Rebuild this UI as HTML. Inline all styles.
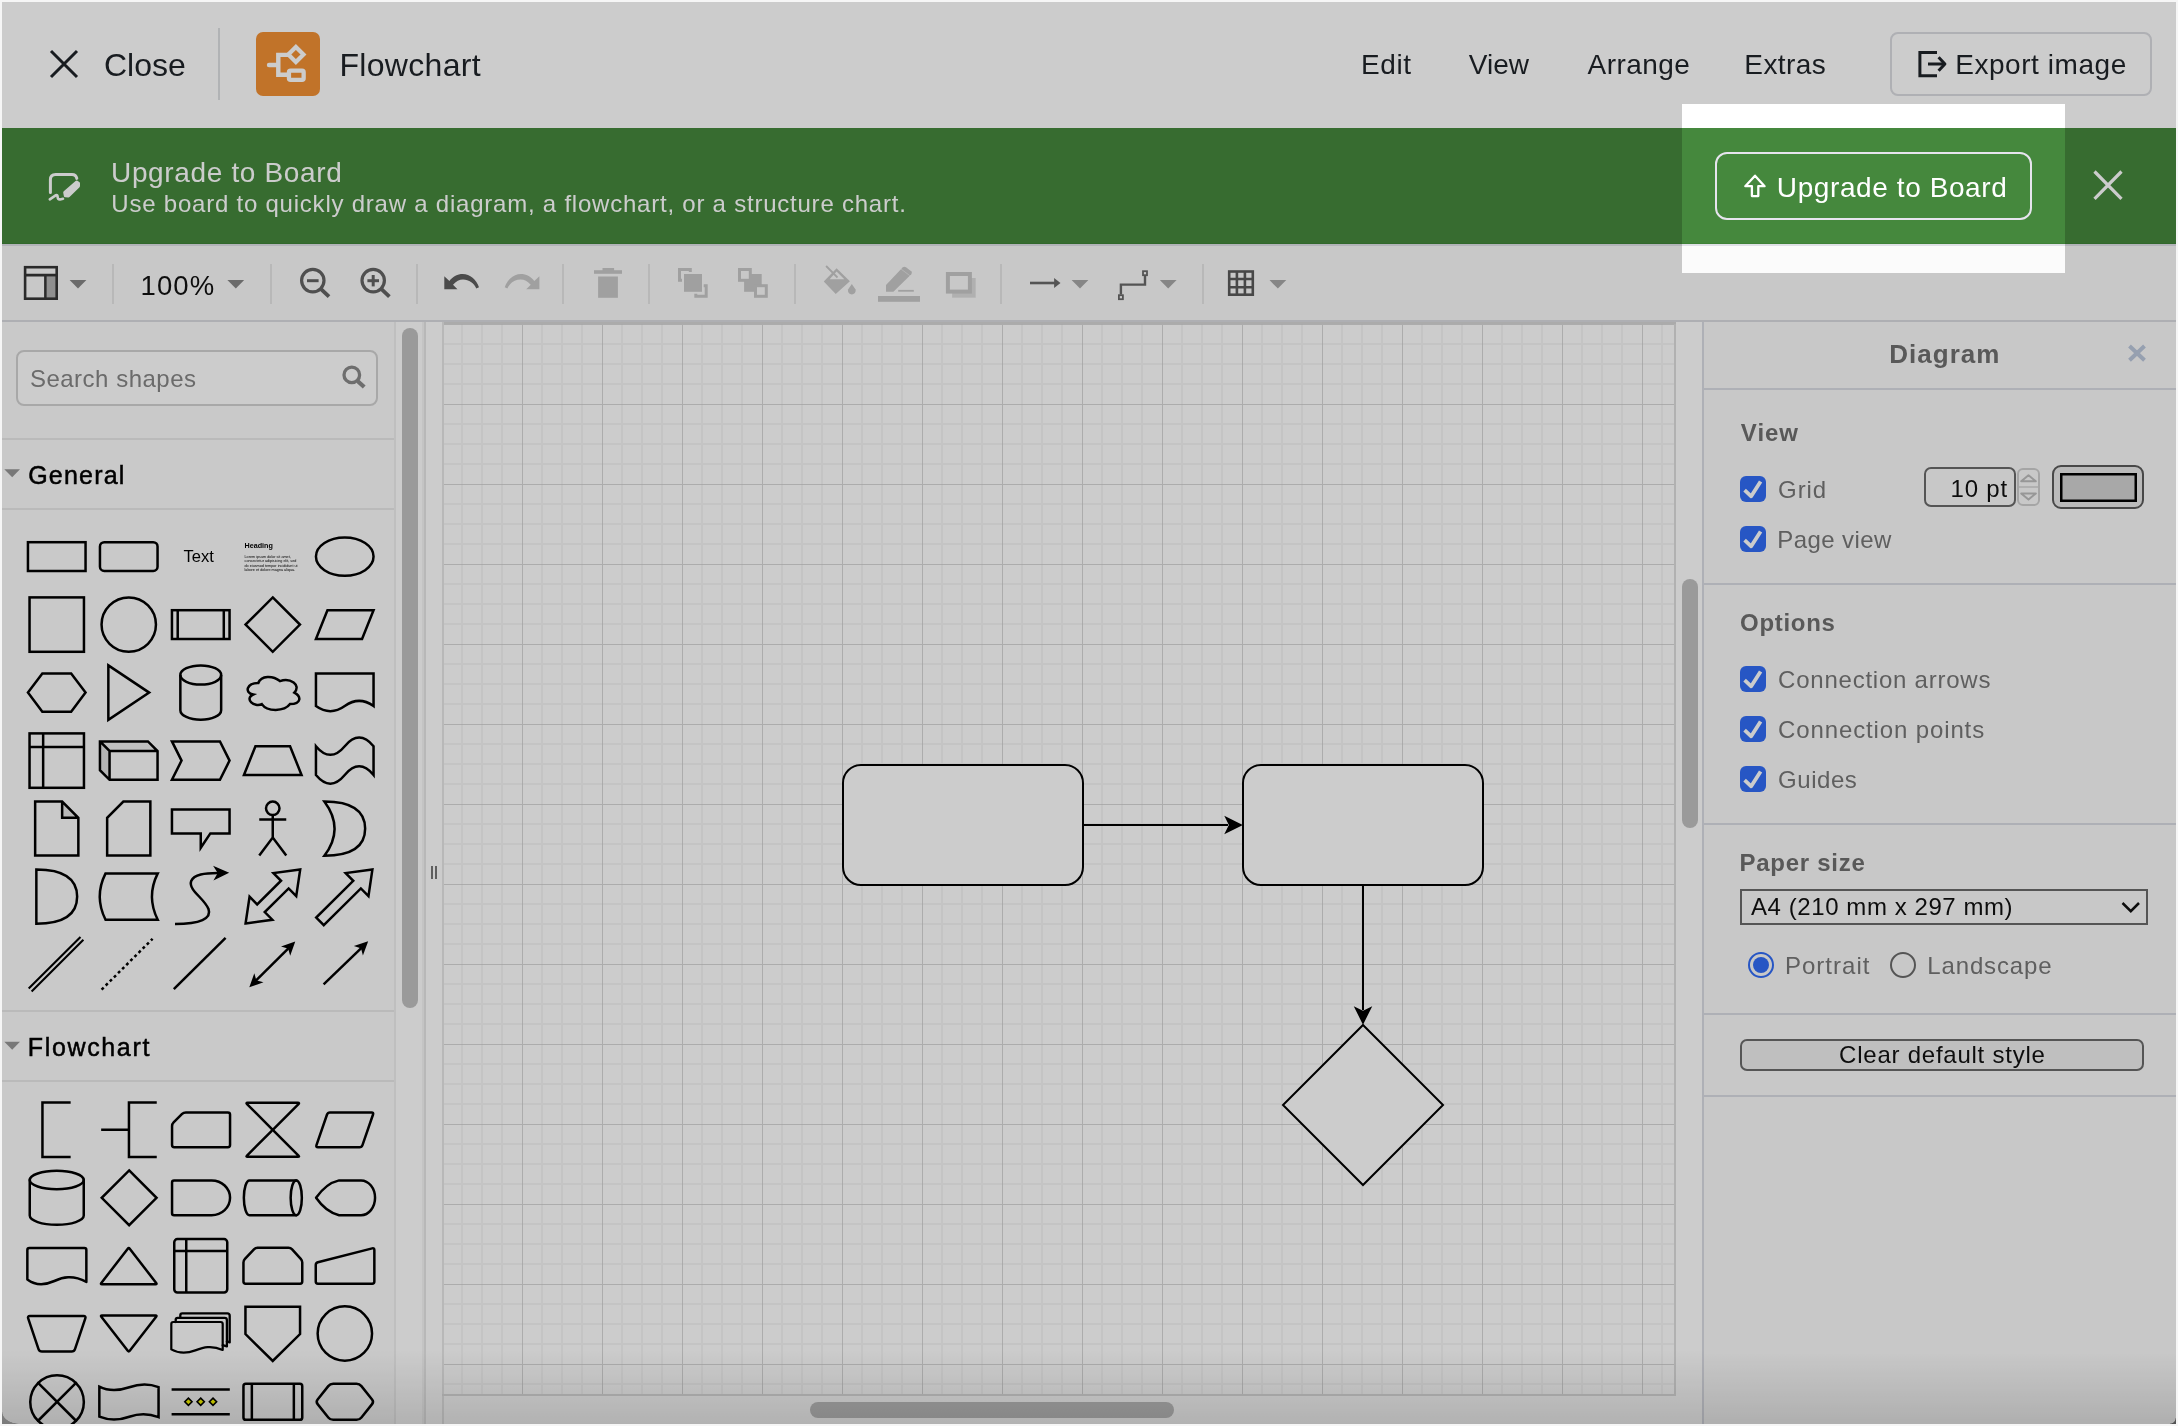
<!DOCTYPE html><html lang="en"><head><meta charset="utf-8"><title>Flowchart</title><style>
html,body{margin:0;padding:0}
body{width:2178px;height:1426px;overflow:hidden;background:#f6f6f6;font-family:"Liberation Sans",sans-serif;position:relative}
#app{will-change:transform;position:absolute;left:0;top:0;width:2178px;height:1426px;clip-path:inset(2px 2px 2px 2px);background:#fff;overflow:hidden}
.t{position:absolute;white-space:nowrap;display:block}
.b{position:absolute;box-sizing:border-box}
svg{position:absolute;left:0;top:0;overflow:visible}
</style></head><body><div id="app">
<div id="header">
<div class="b" style="left:0px;top:0px;width:2178px;height:128px;background:#fff"></div>
<span class="t" style="left:103.90px;top:48.91px;font-size:32px;line-height:32px;color:#1f2329;letter-spacing:0.046px;">Close</span>
<div class="b" style="left:218px;top:28px;width:2px;height:72px;background:#dee0e3"></div>
<div class="b" style="left:256px;top:32px;width:64px;height:64px;background:#f29034;border-radius:7px"></div>
<span class="t" style="left:339.38px;top:48.91px;font-size:32px;line-height:32px;color:#1f2329;letter-spacing:0.316px;">Flowchart</span>
<span class="t" style="left:1360.90px;top:50.90px;font-size:28px;line-height:28px;color:#1f2329;letter-spacing:0.649px;">Edit</span>
<span class="t" style="left:1468.79px;top:50.90px;font-size:28px;line-height:28px;color:#1f2329;letter-spacing:0.019px;">View</span>
<span class="t" style="left:1587.54px;top:50.90px;font-size:28px;line-height:28px;color:#1f2329;letter-spacing:0.444px;">Arrange</span>
<span class="t" style="left:1744.30px;top:50.90px;font-size:28px;line-height:28px;color:#1f2329;letter-spacing:0.410px;">Extras</span>
<div class="b" style="left:1890px;top:32px;width:262px;height:64px;border:2px solid #dbdce1;border-radius:8px"></div>
<span class="t" style="left:1955.20px;top:50.90px;font-size:28px;line-height:28px;color:#1f2329;letter-spacing:0.553px;">Export image</span>
</div>
<div id="banner">
<div class="b" style="left:0px;top:128px;width:2178px;height:116px;background:#45883d"></div>
<div class="b" style="left:0px;top:243px;width:2178px;height:1px;background:#3f8237"></div>
<span class="t" style="left:111.04px;top:159.40px;font-size:28px;line-height:28px;color:#fff;letter-spacing:0.648px;">Upgrade to Board</span>
<span class="t" style="left:111.35px;top:191.78px;font-size:24px;line-height:24px;color:#fff;letter-spacing:0.774px;">Use board to quickly draw a diagram, a flowchart, or a structure chart.</span>
<div class="b" style="left:1715px;top:152px;width:317px;height:68px;border:2px solid #e6e4ee;border-radius:12px"></div>
<span class="t" style="left:1776.84px;top:173.50px;font-size:28px;line-height:28px;color:#fff;letter-spacing:0.594px;">Upgrade to Board</span>
</div>
<div id="toolbar">
<div class="b" style="left:0px;top:244px;width:2178px;height:78px;background:#fbfbfb;border-top:2px solid #dfe0e6;border-bottom:2px solid #dadbe0"></div>
<div class="b" style="left:112px;top:264px;width:2px;height:40px;background:#e6e6e6"></div>
<div class="b" style="left:270px;top:264px;width:2px;height:40px;background:#e6e6e6"></div>
<div class="b" style="left:416px;top:264px;width:2px;height:40px;background:#e6e6e6"></div>
<div class="b" style="left:562px;top:264px;width:2px;height:40px;background:#e6e6e6"></div>
<div class="b" style="left:648px;top:264px;width:2px;height:40px;background:#e6e6e6"></div>
<div class="b" style="left:794px;top:264px;width:2px;height:40px;background:#e6e6e6"></div>
<div class="b" style="left:1000px;top:264px;width:2px;height:40px;background:#e6e6e6"></div>
<div class="b" style="left:1202px;top:264px;width:2px;height:40px;background:#e6e6e6"></div>
<span class="t" style="left:140.51px;top:271.82px;font-size:27.5px;line-height:27.5px;color:#111;letter-spacing:1.112px;">100%</span>
</div>
<div id="sidebar">
<div class="b" style="left:0px;top:322px;width:394px;height:1104px;background:#fcfcfc"></div>
<div class="b" style="left:394px;top:322px;width:2px;height:1104px;background:#efefef"></div>
<div class="b" style="left:16px;top:350px;width:362px;height:56px;border:2px solid #d2d2d2;border-radius:8px;background:#fff"></div>
<span class="t" style="left:29.92px;top:366.58px;font-size:24px;line-height:24px;color:#868686;letter-spacing:0.503px;">Search shapes</span>
<div class="b" style="left:0px;top:438px;width:394px;height:2px;background:#e9e9e9"></div>
<div class="b" style="left:0px;top:508px;width:394px;height:2px;background:#e9e9e9"></div>
<div class="b" style="left:0px;top:1010px;width:394px;height:2px;background:#e9e9e9"></div>
<div class="b" style="left:0px;top:1080px;width:394px;height:2px;background:#e9e9e9"></div>
<span class="t" style="left:28.15px;top:462.64px;font-size:25px;line-height:25px;color:#000;letter-spacing:1.212px;-webkit-text-stroke:0.5px #000;">General</span>
<span class="t" style="left:27.75px;top:1034.64px;font-size:25px;line-height:25px;color:#000;letter-spacing:1.656px;-webkit-text-stroke:0.5px #000;">Flowchart</span>
<div class="b" style="left:402px;top:328px;width:16px;height:680px;background:#c1c1c1;border-radius:8px"></div>
<div class="b" style="left:422px;top:322px;width:2px;height:1104px;background:#f5f5f5"></div>
<div class="b" style="left:424px;top:322px;width:2px;height:1104px;background:#e7e7e7"></div>
</div>
<div id="canvas">
<svg width="2178" height="1426" viewBox="0 0 2178 1426"><defs><pattern id="grid" x="442" y="324" width="80" height="80" patternUnits="userSpaceOnUse"><path d="M20 0V80M40 0V80M60 0V80M0 20H80M0 40H80M0 60H80" stroke="#d0d0d0" stroke-opacity="0.2" stroke-width="2" fill="none"/><path d="M80 0H0V80" stroke="#d0d0d0" stroke-opacity="0.85" stroke-width="2" fill="none"/></pattern><clipPath id="gc"><rect x="442" y="324" width="1232" height="1071"/></clipPath></defs><rect x="442" y="324" width="1232" height="1071" fill="url(#grid)" clip-path="url(#gc)"/></svg>
<div class="b" style="left:444px;top:322px;width:1232px;height:2px;background:#d6d6d6"></div>
<div class="b" style="left:442px;top:322px;width:2px;height:1104px;background:#e7e7e7"></div>
<div class="b" style="left:1674px;top:324px;width:2px;height:1072px;background:#dedede"></div>
<div class="b" style="left:442px;top:1394px;width:1234px;height:2px;background:#dedede"></div>
<div class="b" style="left:1682px;top:579px;width:16px;height:249px;background:#c1c1c1;border-radius:8px"></div>
<div class="b" style="left:810px;top:1402px;width:364px;height:16px;background:#c1c1c1;border-radius:8px"></div>
<div class="b" style="left:431px;top:866px;width:2px;height:13px;background:#777"></div>
<div class="b" style="left:435px;top:866px;width:2px;height:13px;background:#777"></div>
<svg width="2178" height="1426" viewBox="0 0 2178 1426" fill="#fff" stroke="#000" stroke-width="2"><rect x="843" y="765" width="240" height="120" rx="18" ry="18"/><rect x="1243" y="765" width="240" height="120" rx="18" ry="18"/><path d="M1083 825H1228" fill="none"/><path d="M1240.5 825L1226.5 832L1230 825L1226.5 818Z" fill="#000"/><path d="M1363 885V1010" fill="none"/><path d="M1363 1022.5L1356 1008.5L1363 1012L1370 1008.5Z" fill="#000"/><path d="M1363 1025L1443 1105L1363 1185L1283 1105Z"/></svg>
</div>
<div id="panel">
<div class="b" style="left:1704px;top:322px;width:474px;height:1104px;background:#fbfbfb"></div>
<div class="b" style="left:1702px;top:322px;width:2px;height:1104px;background:#dadce4"></div>
<div class="b" style="left:1704px;top:388px;width:474px;height:2px;background:#dadce4"></div>
<div class="b" style="left:1704px;top:583px;width:474px;height:2px;background:#dadce4"></div>
<div class="b" style="left:1704px;top:823px;width:474px;height:2px;background:#dadce4"></div>
<div class="b" style="left:1704px;top:1013px;width:474px;height:2px;background:#dadce4"></div>
<div class="b" style="left:1704px;top:1095px;width:474px;height:2px;background:#dadce4"></div>
<span class="t" style="left:1889.18px;top:341.19px;font-size:26px;line-height:26px;color:#707070;letter-spacing:1.046px;font-weight:bold;">Diagram</span>
<span class="t" style="left:1740.86px;top:421.48px;font-size:24px;line-height:24px;color:#707070;letter-spacing:0.944px;font-weight:bold;">View</span>
<span class="t" style="left:1740.02px;top:611.28px;font-size:24px;line-height:24px;color:#707070;letter-spacing:0.716px;font-weight:bold;">Options</span>
<span class="t" style="left:1739.42px;top:851.28px;font-size:24px;line-height:24px;color:#707070;letter-spacing:0.741px;font-weight:bold;">Paper size</span>
<span class="t" style="left:1778.10px;top:477.58px;font-size:24px;line-height:24px;color:#777;letter-spacing:0.867px;">Grid</span>
<span class="t" style="left:1777.33px;top:528.08px;font-size:24px;line-height:24px;color:#777;letter-spacing:0.395px;">Page view</span>
<span class="t" style="left:1778.10px;top:668.08px;font-size:24px;line-height:24px;color:#777;letter-spacing:0.767px;">Connection arrows</span>
<span class="t" style="left:1778.10px;top:718.08px;font-size:24px;line-height:24px;color:#777;letter-spacing:0.871px;">Connection points</span>
<span class="t" style="left:1778.10px;top:768.08px;font-size:24px;line-height:24px;color:#777;letter-spacing:0.546px;">Guides</span>
<div class="b" style="left:1740px;top:476px;width:26px;height:26px;background:#316cf6;border-radius:6px"></div>
<div class="b" style="left:1740px;top:526px;width:26px;height:26px;background:#316cf6;border-radius:6px"></div>
<div class="b" style="left:1740px;top:666px;width:26px;height:26px;background:#316cf6;border-radius:6px"></div>
<div class="b" style="left:1740px;top:716px;width:26px;height:26px;background:#316cf6;border-radius:6px"></div>
<div class="b" style="left:1740px;top:766px;width:26px;height:26px;background:#316cf6;border-radius:6px"></div>
<div class="b" style="left:1924px;top:467px;width:92px;height:40px;border:2px solid #6b6b6b;border-radius:7px"></div>
<span class="t" style="left:1950.58px;top:476.58px;font-size:24px;line-height:24px;color:#111;letter-spacing:0.804px;">10 pt</span>
<div class="b" style="left:2017px;top:468px;width:23px;height:38px;border:2px solid #cfcfcf;border-radius:6px"></div>
<div class="b" style="left:2052px;top:465px;width:92px;height:44px;border:2px solid #5a5a5a;border-radius:9px;background:#e9e9e9"></div>
<div class="b" style="left:2059.5px;top:473px;width:77px;height:28.5px;box-shadow:inset 0 0 0 2.5px #000;background:#d2d2d2"></div>
<div class="b" style="left:1740px;top:889px;width:408px;height:36px;border:2px solid #6b6b6b"></div>
<span class="t" style="left:1751.05px;top:895.48px;font-size:24px;line-height:24px;color:#111;letter-spacing:0.569px;">A4 (210 mm x 297 mm)</span>
<div class="b" style="left:1748px;top:952px;width:26px;height:26px;border:2px solid #316cf6;border-radius:50%"></div>
<div class="b" style="left:1753px;top:957px;width:16px;height:16px;background:#316cf6;border-radius:50%"></div>
<span class="t" style="left:1784.93px;top:953.68px;font-size:24px;line-height:24px;color:#777;letter-spacing:1.026px;">Portrait</span>
<div class="b" style="left:1890px;top:952px;width:26px;height:26px;border:2px solid #6b6b6b;border-radius:50%"></div>
<span class="t" style="left:1927.23px;top:953.68px;font-size:24px;line-height:24px;color:#777;letter-spacing:0.874px;">Landscape</span>
<div class="b" style="left:1740px;top:1039px;width:404px;height:32px;border:2px solid #6b6b6b;border-radius:7px;background:#efefef"></div>
<span class="t" style="left:1839.10px;top:1043.48px;font-size:24px;line-height:24px;color:#111;letter-spacing:0.759px;">Clear default style</span>
</div>
<svg id="icons" width="2178" height="1426" viewBox="0 0 2178 1426" fill="none"><path d="M51 51L77 77M77 51L51 77" stroke="#1f2329" stroke-width="3"/><g stroke="#fff" stroke-width="4.4" stroke-linecap="round" stroke-linejoin="round"><path d="M269 65H277"/><path d="M288.5 54.9H278.3V74.7H288" stroke-linecap="butt" stroke-linejoin="miter"/><path d="M295.9 46.9L303.5 54.5L295.9 62.1L288.3 54.5Z" stroke-width="4.2" stroke-linejoin="miter"/><rect x="288.95" y="70.65" width="14.7" height="9.2" rx="1.6" stroke-width="4.3"/></g><g stroke="#1f2329" stroke-width="3" stroke-linejoin="miter"><path d="M1937 52.4H1919.9V75.7H1937"/><path d="M1928 64H1943.5"/><path d="M1938.6 57.2L1944.9 64L1938.6 70.8" stroke-linejoin="round"/></g><g stroke="#fff" stroke-width="3" stroke-linecap="round" stroke-linejoin="round"><path d="M50.4 192.5V179.6Q50.4 174.4 55.6 174.4H72Q76 174.4 76.8 178.4"/><path d="M49.8 199.3L56 195.2Q57.5 194.6 57.6 196.6Q57.6 199.6 60 199.4L63 198.7" stroke-width="2.6"/><path d="M76.6 182.2L78.4 183.3V186L68.4 195.8L65.4 195.6L64.8 192.4Z" fill="#fff" stroke-width="3.2"/></g><path d="M1755 175.7L1764.6 186.2H1758.3V196.1H1751.9V186.2H1745.3Z" stroke="#fff" stroke-width="2.3" stroke-linejoin="round"/><path d="M2094.5 171.5L2121.5 198.8M2121.5 171.5L2094.5 198.8" stroke="#fff" stroke-width="3.2"/><rect x="46.5" y="276.3" width="10.5" height="22.5" fill="#b3b3b3"/><g stroke="#353535" stroke-width="2.6"><rect x="25.1" y="267.2" width="31.6" height="31.5"/><path d="M25 275.1H57M45.4 275V299"/></g><path d="M69.6 280.1H86.4L78 288.6Z" fill="#868686"/><path d="M227.4 280.1H244.20000000000002L235.8 288.6Z" fill="#868686"/><path d="M1071.6 280.1H1088.4L1080 288.6Z" fill="#a8a8a8"/><path d="M1159.8 280.1H1176.6000000000001L1168.2 288.6Z" fill="#a8a8a8"/><path d="M1269.5 280.1H1286.3000000000002L1277.9 288.6Z" fill="#a8a8a8"/><g stroke="#636363" stroke-width="3.2"><circle cx="312.8" cy="280.6" r="11.2"/><path d="M320.8 288.8L329.0 296.6" stroke-width="3.8"/><path d="M307.0 280.7H318.6" stroke-width="3"/></g><g stroke="#636363" stroke-width="3.2"><circle cx="373.2" cy="280.6" r="11.2"/><path d="M381.2 288.8L389.4 296.6" stroke-width="3.8"/><path d="M367.4 280.7H379.0" stroke-width="3"/><path d="M373.2 275H373.2V286.4" stroke-width="3"/></g><path d="M444.3 276.2V289.2H457.5L453 284.7C456 281.2 459.5 279.5 463 279.5C469 279.5 474 283 476.3 288.4L479 287.2C476.5 279.5 470 274 462.7 274C457.5 274 453 276.5 449.4 280.9Z" fill="#5e5e5e"/><path d="M444.3 276.2V289.2H457.5L453 284.7C456 281.2 459.5 279.5 463 279.5C469 279.5 474 283 476.3 288.4L479 287.2C476.5 279.5 470 274 462.7 274C457.5 274 453 276.5 449.4 280.9Z" fill="#c9c9c9" transform="translate(983.7 0) scale(-1 1)"/><g fill="#c8c8c8"><rect x="594" y="270.2" width="28" height="3.6"/><rect x="602.5" y="268" width="11.6" height="3"/><rect x="598.1" y="276.5" width="19.8" height="21.3"/></g><g fill="#c8c8c8"><rect x="684" y="274" width="18" height="17.8"/><path d="M678 268H691.8V272H688.8V271H681V278.8H682V281.8H678Z"/><path d="M707.7 297.8H694.3V293.8H697.3V294.8H704.7V287.2H703.7V284.2H707.7Z"/></g><rect x="744.1" y="274" width="17.6" height="17.8" fill="#c8c8c8"/><rect x="739.5" y="269.5" width="10.8" height="10.8" fill="#fbfbfb" stroke="#c8c8c8" stroke-width="3"/><rect x="755.5" y="285.7" width="10.8" height="10.6" fill="#fbfbfb" stroke="#c8c8c8" stroke-width="3"/><path d="M836.6 268.3L849.9 281.3L835.7 294L823.8 281.6Z" fill="#c8c8c8"/><path d="M836.6 271.5L844.3 279.3H829.6Z" fill="#fbfbfb"/><path d="M826.1 266L837.5 277.5" stroke="#c8c8c8" stroke-width="1.8"/><path d="M851.8 284L855.6 289.6A3.9 3.9 0 1 1 848 289.6Z" fill="#c8c8c8"/><path d="M886 291.7V285L902.6 267.4Q904.2 266 906 267.3L911.2 271.2Q912.6 272.6 911.3 274.2L893.4 291.7Z" fill="#c8c8c8"/><path d="M901 269L909.8 275.6" stroke="#fbfbfb" stroke-width="0.8" opacity="0.6"/><rect x="898.2" y="289.9" width="15.6" height="1.8" fill="#c8c8c8"/><rect x="878" y="296" width="42" height="5.8" fill="#c8c8c8"/><rect x="952.1" y="278" width="23.6" height="19.7" fill="#dddddd"/><rect x="947.9" y="274" width="22" height="17.6" fill="#fbfbfb" stroke="#c8c8c8" stroke-width="4"/><path d="M1030 283H1056" stroke="#6a6a6a" stroke-width="2.6"/><path d="M1054.1 278L1060.5 283L1054.1 288.1Z" fill="#6a6a6a"/><g stroke="#6a6a6a" stroke-width="2.4"><path d="M1145 275.5V284.6H1120.9V294.6"/><rect x="1143" y="271.2" width="4" height="4" stroke-width="1.8"/><rect x="1118.9" y="295.2" width="4" height="4" stroke-width="1.8"/></g><g stroke="#5a5a5a" stroke-width="2.6"><rect x="1229.2" y="271.5" width="23.6" height="23.2"/><path d="M1236.9 271.5V294.7M1244.9 271.5V294.7M1229 279H1253M1229 287.2H1253"/></g><g stroke="#8a8a8a" filter="url(#blur1)"><circle cx="351.8" cy="374.9" r="7.8" stroke-width="3.3"/><path d="M357.8 381.2L364.2 387" stroke-width="4.2"/></g><defs><filter id="blur1" x="-20%" y="-20%" width="140%" height="140%"><feGaussianBlur stdDeviation="0.5"/></filter></defs><path d="M4.3 469.2H20L12.2 477.2Z" fill="#979797"/><path d="M4.3 1041.7H20L12.2 1049.7Z" fill="#979797"/><path d="M2129.5 346L2144.5 360.3M2144.5 346L2129.5 360.3" stroke="#bcc8dd" stroke-width="4"/><path d="M1744.6 490.2L1751.2 496.3L1760.6 481.6" stroke="#fff" stroke-width="3.8" stroke-linejoin="round"/><path d="M1744.6 540.2L1751.2 546.3L1760.6 531.6" stroke="#fff" stroke-width="3.8" stroke-linejoin="round"/><path d="M1744.6 680.2L1751.2 686.3L1760.6 671.6" stroke="#fff" stroke-width="3.8" stroke-linejoin="round"/><path d="M1744.6 730.2L1751.2 736.3L1760.6 721.6" stroke="#fff" stroke-width="3.8" stroke-linejoin="round"/><path d="M1744.6 780.2L1751.2 786.3L1760.6 771.6" stroke="#fff" stroke-width="3.8" stroke-linejoin="round"/><g stroke="#bdbdbd" stroke-width="2" stroke-linejoin="round"><path d="M2021.2 481.3L2028.5 475.2L2035.8 481.3Z"/><path d="M2021.2 493.4L2028.5 499.6L2035.8 493.4Z"/><path d="M2019 487H2038" stroke="#dcdcdc"/></g><path d="M2122.5 903L2130.8 911.2L2139 903" stroke="#111" stroke-width="2.5"/></svg>
<svg id="shapes" width="2178" height="1426" viewBox="0 0 2178 1426" fill="none" stroke="#000" stroke-width="2.5" stroke-miterlimit="10"><rect x="27.95" y="542.2" width="57.6" height="28.8"/><rect x="99.95" y="542.2" width="57.6" height="28.8" rx="4.3"/><text x="198.65" y="561.9" font-family="Liberation Sans, sans-serif" font-size="16.6" fill="#000" stroke="none" text-anchor="middle">Text</text><text x="244.5" y="548" font-family="Liberation Sans, sans-serif" font-size="7.2" font-weight="bold" fill="#000" stroke="none">Heading</text><text x="244.5" y="557.9" font-family="Liberation Sans, sans-serif" font-size="3.75" fill="#000" stroke="none">Lorem ipsum dolor sit amet,</text><text x="244.5" y="562.25" font-family="Liberation Sans, sans-serif" font-size="3.75" fill="#000" stroke="none">consectetur adipisicing elit, sed</text><text x="244.5" y="566.6" font-family="Liberation Sans, sans-serif" font-size="3.75" fill="#000" stroke="none">do eiusmod tempor incididunt ut</text><text x="244.5" y="570.95" font-family="Liberation Sans, sans-serif" font-size="3.75" fill="#000" stroke="none">labore et dolore magna aliqua.</text><ellipse cx="344.75" cy="556.6" rx="28.8" ry="19.2"/><rect x="29.55" y="597.4" width="54.4" height="54.4"/><circle cx="128.75" cy="624.6" r="27.2"/><rect x="171.95" y="610.2" width="57.6" height="28.8"/><path d="M177.71 610.2V639M223.79 610.2V639" /><path d="M272.75 597.4L299.95 624.6L272.75 651.8L245.55 624.6Z" /><path d="M315.95 639L327.45 610.2L373.55 610.2L362.05 639Z" /><path d="M42.35 673.4L71.15 673.4L85.55 692.6L71.15 711.8L42.35 711.8L27.95 692.6Z" /><path d="M108.35 665.4L149.15 692.6L108.35 719.8Z" /><path d="M180.35 675A20.4 9.6 0 0 1 221.15 675V710.2A20.4 9.6 0 0 1 180.35 710.2Z" /><path d="M180.35 675A20.4 9.6 0 0 0 221.15 675" /><path d="M258.35 683C246.83 683 243.95 692.6 253.17 694.52C243.95 698.74 254.32 707.96 261.81 704.12C266.99 711.8 284.27 711.8 290.03 704.12C301.55 704.12 301.55 696.44 294.35 692.6C301.55 684.92 290.03 677.24 279.95 681.08C272.75 675.32 261.23 675.32 258.35 683Z" /><path d="M315.95 673.4H373.55V706.04Q359.15 695.67 344.75 706.04Q330.35 716.41 315.95 706.04Z" /><rect x="29.55" y="733.4" width="54.4" height="54.4"/><path d="M29.55 747H83.95M43.15 733.4V787.8" /><path d="M99.95 741.4L147.95 741.4L157.55 751L109.55 751Z" fill="#000" fill-opacity="0.05" stroke="none"/><path d="M99.95 741.4L109.55 751L109.55 779.8L99.95 770.2Z" fill="#000" fill-opacity="0.1" stroke="none"/><path d="M99.95 741.4L147.95 741.4L157.55 751L157.55 779.8L109.55 779.8L99.95 770.2ZM99.95 741.4L109.55 751H157.55M109.55 751V779.8" /><path d="M171.95 741.4L219.95 741.4L229.55 760.6L219.95 779.8L171.95 779.8L181.55 760.6Z" /><path d="M243.95 775L255.45 746.2L290.05 746.2L301.55 775Z" /><path d="M315.95 746.2Q330.35 763.48 344.75 746.2Q359.15 728.92 373.55 746.2V775Q359.15 757.72 344.75 775Q330.35 792.28 315.95 775Z" /><path d="M62.15 801.6L62.15 817.8L78.35 817.8Z" fill="#000" fill-opacity="0.08" stroke="none"/><path d="M35.15 801.6L62.15 801.6L78.35 817.8L78.35 855.6L35.15 855.6ZM62.15 801.6V817.8H78.35" /><path d="M123.35 801.6L150.35 801.6L150.35 855.6L107.15 855.6L107.15 817.8Z" /><path d="M171.95 809.4L229.55 809.4L229.55 833.4L210.35 833.4L200.75 847.8L200.75 833.4L171.95 833.4Z" /><ellipse cx="272.75" cy="808.35" rx="6.75" ry="6.75"/><path d="M272.75 815.1V837.6M259.25 819.6H286.25M259.25 855.6L272.75 837.6L286.25 855.6" /><path d="M324.35 801.4Q365.15 801.4 365.15 828.6Q365.15 855.8 324.35 855.8Q344.75 828.6 324.35 801.4Z" /><path d="M36.35 869.4Q77.15 869.4 77.15 896.6Q77.15 923.8 36.35 923.8Z" /><path d="M105.55 873.4H157.75Q146.15 896.6 157.75 919.8H105.55Q93.95 896.6 105.55 873.4Z" /><path d="M175 924C200 924 212 918.5 208.5 909C204.5 898.5 188 890 191.2 881C194 874 205 873.2 218 873" /><path d="M227.3 872.8L215.43 878.66L218.7 872.99L215.18 867.47Z" fill="#000" stroke-width="1.6"/><path d="M245.6 923.4L272.35 919.73L264.75 912.05L288.64 888.43L296.23 896.11L300.2 869.4L273.45 873.07L281.05 880.75L257.16 904.37L249.57 896.69Z" /><path d="M323.8 925.23L360.87 888.45L368.48 896.11L372.4 869.4L345.66 873.12L353.26 880.78L316.2 917.57Z" /><path d="M28.7 988.5L80.5 936.9M31.6 991.4L83.4 939.8" stroke-width="2.1"/><path d="M101.6 989.6L152.6 938.8" stroke-dasharray="2.9 2.9"/><path d="M173.8 989.2L225.6 937.8" /><path d="M254.6 982L289.9 946.9" /><path d="M293.9 942.9L290.27 953.14L288.8 947.98L283.64 946.48Z" fill="#000" stroke-width="1.6"/><path d="M250.6 986L254.23 975.76L255.7 980.92L260.86 982.42Z" fill="#000" stroke-width="1.6"/><path d="M323.6 984.4L362.8 946.6" /><path d="M366.8 942.6L363.03 952.79L361.63 947.61L356.49 946.04Z" fill="#000" stroke-width="1.6"/><g stroke-linejoin="round" stroke-linecap="round"><path d="M70.65 1102.6H42.45V1157H70.65" stroke-linecap="butt" stroke-linejoin="miter"/><path d="M156.75 1102.6H128.95V1157H156.75M101.15 1129.8H128.95" stroke-linecap="butt" stroke-linejoin="miter"/><path d="M182.09 1113.96Q183.65 1112.4 185.85 1112.4L227.85 1112.4Q230.05 1112.4 230.05 1114.6L230.05 1145Q230.05 1147.2 227.85 1147.2L174.25 1147.2Q172.05 1147.2 172.05 1145L172.05 1126.2Q172.05 1124 173.61 1122.44Z" /><path d="M247.02 1104.07Q245.75 1102.8 247.55 1102.8L297.95 1102.8Q299.75 1102.8 298.48 1104.07L274.02 1128.53Q272.75 1129.8 274.02 1131.07L298.48 1155.53Q299.75 1156.8 297.95 1156.8L247.55 1156.8Q245.75 1156.8 247.02 1155.53L271.48 1131.07Q272.75 1129.8 271.48 1128.53Z" /><path d="M327.03 1114.48Q327.75 1112.4 329.95 1112.4L371.55 1112.4Q373.75 1112.4 373.03 1114.48L362.47 1145.12Q361.75 1147.2 359.55 1147.2L317.95 1147.2Q315.75 1147.2 316.47 1145.12Z" /><path d="M29.75 1180A27.0 9.2 0 0 1 83.75 1180V1215.6A27.0 9.2 0 0 1 29.75 1215.6Z" /><path d="M29.75 1180A27.0 9.2 0 0 0 83.75 1180" /><path d="M129.15 1170.4L156.55 1197.8L129.15 1225.2L101.75 1197.8Z" stroke-linejoin="miter"/><path d="M174.05 1180.4H211.65A18.4 17.4 0 0 1 211.65 1215.2H174.05Q172.05 1215.2 172.05 1213.2V1182.4Q172.05 1180.4 174.05 1180.4Z" /><path d="M249.45 1180.4H296.25A5.6 17.4 0 0 1 296.25 1215.2H249.45A5.6 17.4 0 0 1 249.45 1180.4Z" /><path d="M296.25 1180.4A5.6 17.4 0 0 0 296.25 1215.2" /><path d="M316.05 1197.8Q326.05 1183.4 339.05 1180.4H361.05A14 17.4 0 0 1 361.05 1215.2H339.05Q326.05 1212.2 316.05 1197.8Z" /><path d="M29.35 1248.1H84.35Q86.35 1248.1 86.35 1250.1V1281.9C72.35 1274.5 62.35 1277.5 54.35 1281C44.35 1285.5 35.35 1285.5 27.35 1279.5V1250.1Q27.35 1248.1 29.35 1248.1Z" /><path d="M127.77 1248.67Q128.75 1247.4 129.73 1248.67L156.17 1282.93Q157.15 1284.2 155.55 1284.2L101.95 1284.2Q100.35 1284.2 101.33 1282.93Z" /><rect x="174.25" y="1239.1" width="53" height="53.4" rx="3.2"/><path d="M186.25 1239.1V1292.5M174.25 1251.1H227.25" stroke-linecap="butt"/><path d="M253.93 1249.39Q255.45 1247.8 257.65 1247.8L288.45 1247.8Q290.65 1247.8 292.14 1249.42L300.76 1258.78Q302.25 1260.4 302.25 1262.6L302.25 1281.6Q302.25 1283.8 300.05 1283.8L245.65 1283.8Q243.45 1283.8 243.45 1281.6L243.45 1262.6Q243.45 1260.4 244.97 1258.81Z" /><path d="M315.75 1265Q315.75 1262.8 317.88 1262.25L372.22 1248.35Q374.35 1247.8 374.35 1250L374.35 1281.6Q374.35 1283.8 372.15 1283.8L317.95 1283.8Q315.75 1283.8 315.75 1281.6Z" /><path d="M28.18 1318.46Q27.35 1316 29.95 1316L83.55 1316Q86.15 1316 85.32 1318.46L74.98 1349.14Q74.15 1351.6 71.55 1351.6L41.95 1351.6Q39.35 1351.6 38.52 1349.14Z" /><path d="M101.33 1316.76Q100.35 1315.5 101.95 1315.5L155.55 1315.5Q157.15 1315.5 156.17 1316.76L129.73 1350.84Q128.75 1352.1 127.77 1350.84Z" /><path d="M180.3 1317.8V1315.4Q180.3 1313.4 182.3 1313.4H227.3Q229.7 1313.4 229.7 1315.8V1342.4L226.9 1341.4" stroke-width="2.3"/><path d="M175.7 1322V1319.8Q175.7 1317.8 177.7 1317.8H224.7Q226.9 1317.8 226.9 1320V1346.4L222.7 1345.2" stroke-width="2.3"/><path d="M173.3 1322H220.7Q222.7 1322 222.7 1324V1350C211.3 1344.8 203.3 1347.4 195.3 1350.4C187.3 1353.4 178.3 1353.4 171.3 1349.4V1324Q171.3 1322 173.3 1322Z" stroke-width="2.2"/><path d="M245.45 1306.7L300.05 1306.7L300.05 1334.1L272.75 1360.9L245.45 1334.1Z" stroke-linejoin="miter"/><circle cx="344.85" cy="1333.5" r="27.2"/><circle cx="57.05" cy="1402" r="26.8"/><path d="M38.1 1382.85L76 1420.75M76 1382.85L38.1 1420.75" /><path d="M99.35 1386.7C109.35 1391.7 119.35 1390.7 129.35 1387.3C139.35 1383.7 149.35 1383.7 158.55 1387.1V1417.1C149.35 1413.6 139.35 1413.1 129.35 1416.7C119.35 1420.3 109.35 1420.7 99.35 1416.7Z" stroke-linejoin="miter"/><path d="M171.6 1389.5H229.8M171.6 1414.3H229.8" stroke-linecap="butt"/><path d="M188.4 1398.1L192 1401.7L188.4 1405.3L184.8 1401.7Z" fill="#ffff00" stroke-width="1.6" stroke-linejoin="miter"/><path d="M200.7 1398.1L204.3 1401.7L200.7 1405.3L197.1 1401.7Z" fill="#ffff00" stroke-width="1.6" stroke-linejoin="miter"/><path d="M213 1398.1L216.6 1401.7L213 1405.3L209.4 1401.7Z" fill="#ffff00" stroke-width="1.6" stroke-linejoin="miter"/><rect x="243.45" y="1383.8" width="58.8" height="36" rx="2.4"/><path d="M251.85 1383.8V1419.8M293.85 1383.8V1419.8" stroke-linecap="butt"/><path d="M328.28 1386.14Q330.15 1383.8 333.15 1383.8L356.55 1383.8Q359.55 1383.8 361.42 1386.14L372.08 1399.46Q373.95 1401.8 372.08 1404.14L361.42 1417.46Q359.55 1419.8 356.55 1419.8L333.15 1419.8Q330.15 1419.8 328.28 1417.46L317.62 1404.14Q315.75 1401.8 317.62 1399.46Z" /></g></svg>
<div class="b" style="left:2px;top:1412px;width:18px;height:12px;background:radial-gradient(ellipse 18px 12px at 100% 0,rgba(0,0,0,0) 96%,#b0b0b0 100%)"></div>
<div class="b" style="left:2170px;top:1418px;width:6px;height:6px;background:radial-gradient(circle at 0 0,rgba(0,0,0,0) 5.2px,#777 6px)"></div>
<div class="b" style="left:0px;top:1350px;width:2178px;height:76px;background:linear-gradient(to bottom,rgba(0,0,0,0),rgba(0,0,0,0.13))"></div>
<div class="b" style="left:1682px;top:104px;width:383px;height:169px;box-shadow:0 0 0 4000px rgba(0,0,0,0.2)"></div>
</div></body></html>
